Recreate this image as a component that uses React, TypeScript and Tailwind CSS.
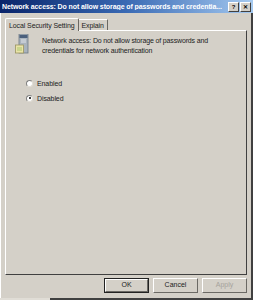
import React from "react";

const font = { fontFamily: '"Liberation Sans", Arial, sans-serif' };

const Radio = ({ checked, label }: { checked?: boolean; label: string }) => (
    <div className="flex items-center h-[8px] gap-[4px]">
        <span className="relative w-[7px] h-[7px] rounded-full bg-white border border-[#808080] border-r-[#e0ddd6] border-b-[#e0ddd6]">
            {checked && (
                <span className="absolute left-[1.5px] top-[1.5px] w-[2px] h-[2px] rounded-full bg-black" />
            )}
        </span>
        <span className="text-[7px] tracking-[-0.1px] leading-none text-[#222]">{label}</span>
    </div>
);

const PolicyIcon = () => (
    <svg width="16" height="20" viewBox="0 0 16 20">
        <rect x="4" y="0" width="9" height="19" fill="#a9b3bd" stroke="#6f7a86" strokeWidth="0.8" />
        <rect x="4.5" y="1" width="8" height="3" fill="#4a5f7c" />
        <rect x="6" y="5.5" width="5" height="1" fill="#dfe4ea" />
        <rect x="6" y="7.5" width="5" height="1" fill="#dfe4ea" />
        <rect x="0.5" y="11" width="8" height="8" fill="#e9e3a8" stroke="#9a9460" strokeWidth="0.8" />
        <rect x="2" y="13" width="5" height="4" fill="#c9d48c" />
    </svg>
);

const Button = ({ label, isDefault, disabled }: { label: string; isDefault?: boolean; disabled?: boolean }) => (
    <div
        className={
            "w-[45px] h-[15px] flex items-center justify-center text-[7px] " +
            (isDefault ? "border border-[#222] " : "") +
            (disabled ? "text-[#a6a39c]" : "text-[#222]")
        }
    >
        <div className="w-full h-full flex items-center justify-center border border-white border-r-[#6b6964] border-b-[#6b6964]">
            {label}
        </div>
    </div>
);

export default function App() {
    return (
        <div className="w-[253px] h-[300px] bg-[#d4d0c8] flex flex-col overflow-hidden" style={font}>
            <div className="h-[13px] flex items-center pl-[2px] pr-[2px] bg-gradient-to-r from-[#0a246a] via-[#3a6ab4] to-[#a6caf0]">
                <span className="flex-1 text-white text-[7px] tracking-[-0.1px] font-bold leading-none whitespace-nowrap overflow-hidden">
                    Network access: Do not allow storage of passwords and credentia...
                </span>
                <div className="flex gap-[1px] ml-[2px]">
                    <div className="w-[11px] h-[10px] bg-[#d4d0c8] border border-white border-r-[#404040] border-b-[#404040] flex items-center justify-center text-[6px] font-bold leading-none">?</div>
                    <div className="w-[11px] h-[10px] bg-[#d4d0c8] border border-white border-r-[#404040] border-b-[#404040] flex items-center justify-center text-[6px] font-bold leading-none">✕</div>
                </div>
            </div>
            <div className="flex-1 flex border-l border-l-white border-r-2 border-r-[#404040]">
                <div className="flex-1 flex flex-col px-[4px] pt-[4px]">
                    <div className="flex items-end h-[13px]">
                        <div className="relative z-10 h-[13px] px-[3px] bg-[#d4d0c8] border-t border-l border-white border-r border-r-[#6b6964] rounded-t-[2px] text-[7px] tracking-[-0.1px] leading-none flex items-center text-[#222] -mb-[1px]">
                            Local Security Setting
                        </div>
                        <div className="h-[11px] px-[3px] border-t border-white border-r border-r-[#6b6964] text-[7px] tracking-[-0.1px] leading-none flex items-center text-[#222]">
                            Explain
                        </div>
                    </div>
                    <div className="h-[245px] border border-white border-r-[#404040] border-b-[#404040] flex flex-col pl-[9px] pt-[5px]">
                        <div className="flex gap-[11px]">
                            <div className="-mt-[2px]">
                                <PolicyIcon />
                            </div>
                            <p className="text-[7px] tracking-[-0.15px] leading-[10px] text-[#222] w-[180px]">
                                Network access: Do not allow storage of passwords and credentials for network authentication
                            </p>
                        </div>
                        <div className="flex flex-col gap-[7px] mt-[23px] pl-[11px]">
                            <Radio label="Enabled" />
                            <Radio label="Disabled" checked />
                        </div>
                    </div>
                    <div className="flex justify-end gap-[4px] mt-[3px]">
                        <Button label="OK" isDefault />
                        <Button label="Cancel" />
                        <Button label="Apply" disabled />
                    </div>
                </div>
            </div>
            <div className="h-[2px] flex">
                <div className="w-[50px] bg-[#e0ddd6]" />
                <div className="flex-1 bg-[#404040]" />
            </div>
        </div>
    );
}
